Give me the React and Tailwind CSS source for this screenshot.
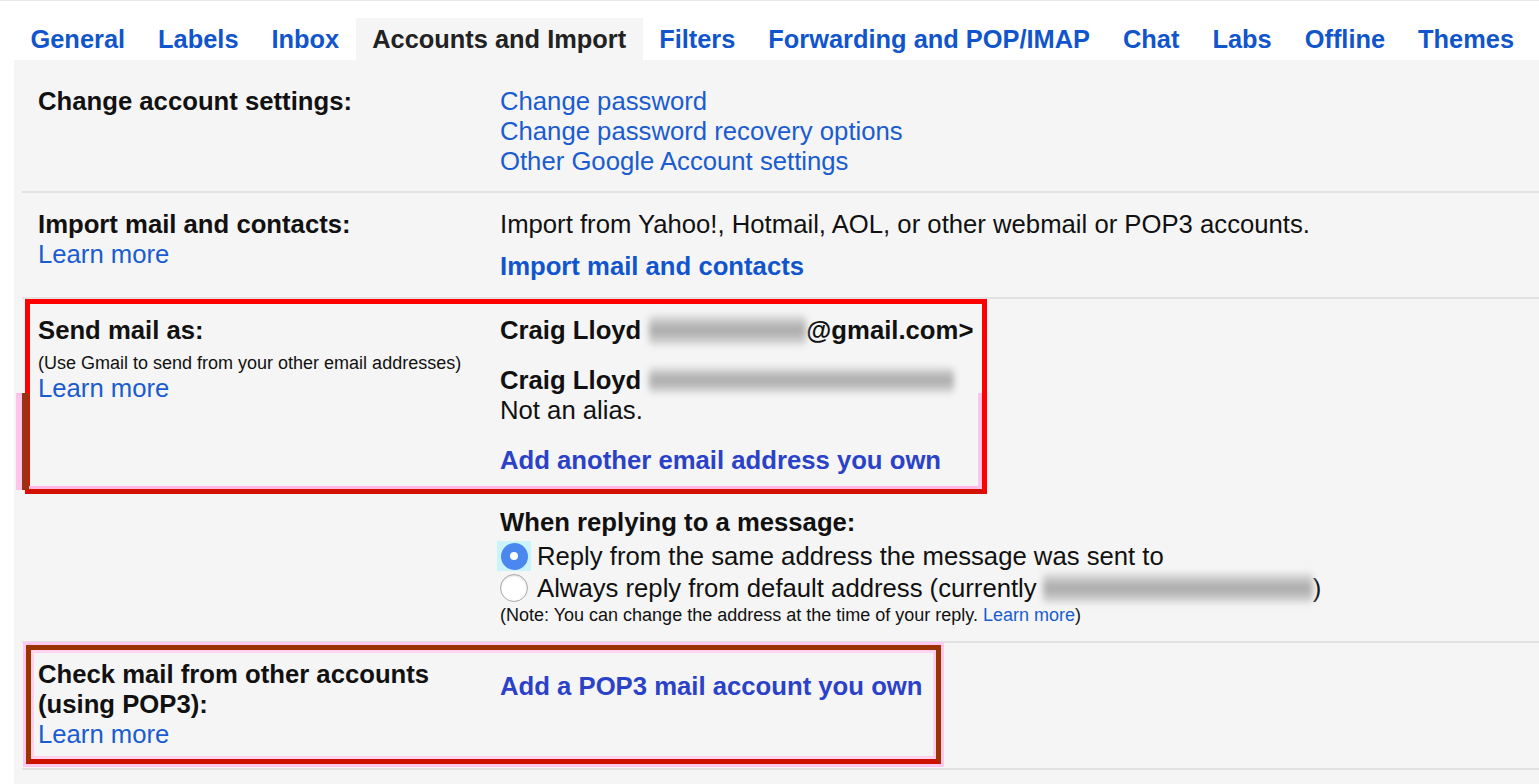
import React from "react";

const tabs = [
  "General",
  "Labels",
  "Inbox",
  "Accounts and Import",
  "Filters",
  "Forwarding and POP/IMAP",
  "Chat",
  "Labs",
  "Offline",
  "Themes",
];

const Blur = ({ className }) => (
  <span
    className={
      "inline-block align-middle rounded-sm bg-linear-to-b from-[#e2e2e2] via-[#a8a8a8] to-[#dcdcdc] blur-[3px] " +
      className
    }
  />
);

const Row = ({ label, children, className }) => (
  <div
    className={
      "ml-[8px] pl-[16px] flex border-b-2 border-[#e2e2e2] " + (className || "")
    }
  >
    <div className="w-[462px] shrink-0">{label}</div>
    <div className="flex-1">{children}</div>
  </div>
);

const App = () => {
  return (
    <div className="relative min-h-screen bg-white text-[#111] font-['Liberation_Sans',Arial,sans-serif] text-[25.7px] leading-[30px] overflow-hidden">
      <div className="h-px bg-[#e6e6e6]" />

      {/* tabs */}
      <div className="pl-[14px] pt-[17px] flex text-[25.4px]">
        {tabs.map((t) => (
          <div
            key={t}
            className={
              t === "Accounts and Import"
                ? "h-[42px] px-[16.5px] flex items-center font-bold bg-[#f5f5f5] text-[#222]"
                : "h-[42px] px-[16.5px] flex items-center font-bold text-[#1155cc]"
            }
          >
            {t}
          </div>
        ))}
      </div>

      {/* settings panel */}
      <div className="ml-[14px] bg-[#f5f5f5] min-h-[724px]">
        <Row
          className="pt-[26px] pb-[15px]"
          label={<div className="font-bold">Change account settings:</div>}
        >
          <div className="text-[#1a5ccf]">Change password</div>
          <div className="text-[#1a5ccf]">Change password recovery options</div>
          <div className="text-[#1a5ccf]">Other Google Account settings</div>
        </Row>

        <Row
          className="pt-[16px] pb-[16px]"
          label={
            <>
              <div className="font-bold">Import mail and contacts:</div>
              <div className="text-[#1a5ccf]">Learn more</div>
            </>
          }
        >
          <div className="whitespace-nowrap">
            Import from Yahoo!, Hotmail, AOL, or other webmail or POP3 accounts.
          </div>
          <div className="mt-[12px] font-bold text-[#1155cc]">
            Import mail and contacts
          </div>
        </Row>

        <Row
          className="pt-[16px] pb-[16px]"
          label={
            <>
              <div className="font-bold">Send mail as:</div>
              <div className="mt-[8px] text-[18px] leading-[20px] whitespace-nowrap">
                (Use Gmail to send from your other email addresses)
              </div>
              <div className="text-[#1a5ccf]">Learn more</div>
            </>
          }
        >
          <div className="font-bold flex items-center whitespace-nowrap">
            <span>Craig Lloyd</span>
            <Blur className="ml-[8px] w-[157px] h-[30px]" />
            <span>@gmail.com&gt;</span>
          </div>
          <div className="mt-[20px] font-bold flex items-center whitespace-nowrap">
            <span>Craig Lloyd</span>
            <Blur className="ml-[8px] w-[305px] h-[26px]" />
          </div>
          <div>Not an alias.</div>
          <div className="mt-[20px] font-bold text-[#2b42c8]">
            Add another email address you own
          </div>

          <div className="mt-[32px] font-bold">When replying to a message:</div>
          <div className="mt-[3px] h-[32px] flex items-center whitespace-nowrap">
            <span className="w-[34px] h-[30px] -ml-[3px] flex items-center justify-center bg-[#cbf3fb]">
              <span className="w-[27px] h-[27px] rounded-full bg-[#4a88ef] flex items-center justify-center">
                <span className="w-[8px] h-[8px] rounded-full bg-white" />
              </span>
            </span>
            <span className="ml-[6px]">
              Reply from the same address the message was sent to
            </span>
          </div>
          <div className="h-[32px] flex items-center whitespace-nowrap">
            <span className="w-[28px] h-[28px] rounded-full bg-white border border-[#a9a9a9] shadow-[inset_0_1px_2px_rgba(0,0,0,0.15)]" />
            <span className="ml-[9px]">
              Always reply from default address (currently
            </span>
            <Blur className="ml-[6px] w-[270px] h-[30px]" />
            <span>)</span>
          </div>
          <div className="mt-[1px] text-[18px] leading-[20px] whitespace-nowrap">
            (Note: You can change the address at the time of your reply.{" "}
            <span className="text-[#1a5ccf]">Learn more</span>)
          </div>
        </Row>

        <Row
          className="pt-[16px] pb-[19px]"
          label={
            <>
              <div className="font-bold">Check mail from other accounts</div>
              <div className="font-bold">(using POP3):</div>
              <div className="text-[#1a5ccf]">Learn more</div>
            </>
          }
        >
          <div className="mt-[12px] font-bold text-[#2b42c8]">
            Add a POP3 mail account you own
          </div>
        </Row>
      </div>

      {/* annotation boxes */}
      <div className="absolute left-[25px] top-[299px] w-[962px] h-[195px] border-[5px] border-[#ff0000] border-b-[#d41000] pointer-events-none" />
      <div className="absolute left-[16px] top-[393px] w-[6px] h-[97px] bg-[#ffc4ea] pointer-events-none" />
      <div className="absolute left-[22px] top-[393px] w-[7px] h-[97px] bg-[#9a3212] pointer-events-none" />
      <div className="absolute left-[29px] top-[486px] w-[953px] h-[3px] bg-[#ffb8e6] pointer-events-none" />
      <div className="absolute left-[978px] top-[393px] w-[4px] h-[96px] bg-[#ffc4ea] pointer-events-none" />

      <div className="absolute left-[26px] top-[645px] w-[915px] h-[119px] border-[5px] border-[#9a3300] border-b-[#cc1100] shadow-[0_0_0_3px_#ffc8ee,inset_0_0_0_3px_#ffd2f0] pointer-events-none" />
    </div>
  );
};

export default App;
